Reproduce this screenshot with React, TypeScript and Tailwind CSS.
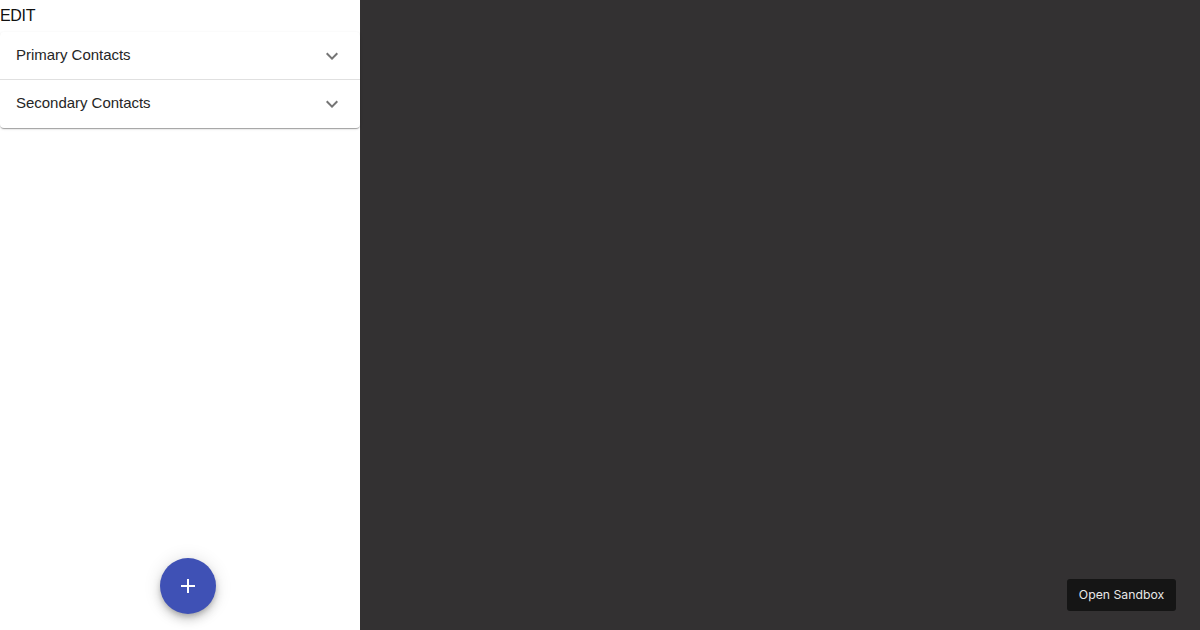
import React from "react";

function Chevron() {
  return (
    <svg viewBox="0 0 24 24" className="w-6 h-6" fill="#757575">
      <path d="M16.59 8.59 12 13.17 7.41 8.59 6 10l6 6 6-6z" />
    </svg>
  );
}

function Row({ label, border }: { label: string; border?: boolean }) {
  return (
    <div className={border ? "flex items-center justify-between h-12 px-4 border-b border-[#e0e0e0]" : "flex items-center justify-between h-12 px-4"}>
      <span className="text-[15px] leading-none text-[#262626] -mt-[3px] tracking-[-0.03px]">{label}</span>
      <Chevron />
    </div>
  );
}

export default function App() {
  return (
    <div className="relative flex w-[1200px] h-[630px] overflow-hidden bg-white font-['Liberation_Sans',Arial,sans-serif]">
      <div className="relative w-[360px] h-full bg-white">
        <div className="h-8 text-base leading-[32px] tracking-[-0.02em] text-[#111]">EDIT</div>
        <div className="rounded bg-white shadow-[0_1px_1px_0_rgba(0,0,0,0.14),0_1px_3px_0_rgba(0,0,0,0.12),0_2px_1px_-1px_rgba(0,0,0,0.2)]">
          <Row label="Primary Contacts" border />
          <Row label="Secondary Contacts" />
        </div>
        <button className="absolute left-[160px] top-[558px] w-14 h-14 rounded-full bg-[#3f51b5] flex items-center justify-center shadow-[0_3px_5px_-1px_rgba(0,0,0,0.2),0_6px_10px_0_rgba(0,0,0,0.14),0_1px_18px_0_rgba(0,0,0,0.12)]">
          <svg viewBox="0 0 24 24" className="w-6 h-6" fill="#fff">
            <path d="M19 13h-6v6h-2v-6H5v-2h6V5h2v6h6v2z" />
          </svg>
        </button>
      </div>
      <div className="flex-1 h-full bg-[#333132]" />
      <div className="absolute left-[1067px] top-[579px] w-[109px] h-8 rounded-[3px] bg-[#151515] flex items-center justify-center text-[12.25px] text-[#e8e8e8] font-['Inter',sans-serif]">
        Open Sandbox
      </div>
    </div>
  );
}
